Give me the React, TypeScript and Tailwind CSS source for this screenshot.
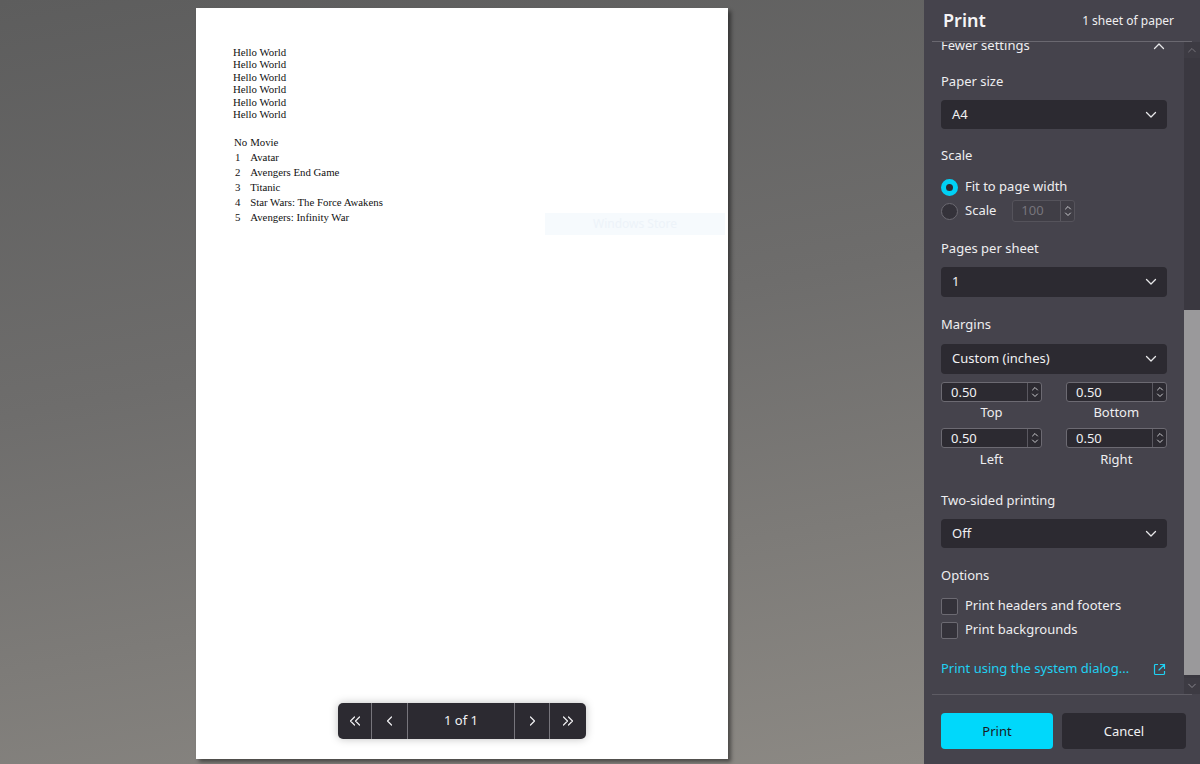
import React from "react";

const UI = { fontFamily: '"Segoe UI", "Noto Sans", "Open Sans", sans-serif' };
const SERIF = { fontFamily: '"Liberation Serif", "Times New Roman", serif' };

function Chevron({ up = false, className = "" }: { up?: boolean; className?: string }) {
  return (
    <svg width="12" height="8" viewBox="0 0 12 8" className={className} fill="none">
      <path d={up ? "M1.5 6.5 L6 2 L10.5 6.5" : "M1.5 1.5 L6 6 L10.5 1.5"} stroke="currentColor" strokeWidth="1.3" strokeLinecap="round" strokeLinejoin="round" />
    </svg>
  );
}

function Spin() {
  return (
    <div className="flex h-full w-[14px] flex-col items-center justify-center border-l border-[#5a5860] text-[#c8c8cc]">
      <svg width="8" height="14" viewBox="0 0 8 14" fill="none">
        <path d="M1.5 5 L4 2.5 L6.5 5" stroke="currentColor" strokeWidth="1" strokeLinecap="round" strokeLinejoin="round" />
        <path d="M1.5 9 L4 11.5 L6.5 9" stroke="currentColor" strokeWidth="1" strokeLinecap="round" strokeLinejoin="round" />
      </svg>
    </div>
  );
}

function Select({ value, mt, h = "h-[30px]" }: { value: string; mt: string; h?: string }) {
  return (
    <div className={`${mt} ${h} flex items-center justify-between rounded-[4px] bg-[#2c2a31] pl-[11px] pr-[10px] text-[13px] text-[#f1f1f3]`}>
      <span>{value}</span>
      <Chevron className="text-[#e8e8ea]" />
    </div>
  );
}

function Label({ text, mt }: { text: string; mt: string }) {
  return <div className={`${mt} flex h-[20px] items-center text-[13px] text-[#eeeef0]`}>{text}</div>;
}

function MarginInput() {
  return (
    <div className="flex h-[20px] w-[101px] items-center overflow-hidden rounded-[3px] border border-[#6c6a72] bg-[#2c2a31]">
      <span className="flex-1 pl-[9px] text-[13px] leading-none text-[#f1f1f3]">0.50</span>
      <Spin />
    </div>
  );
}

function Checkbox({ label }: { label: string }) {
  return (
    <div className="flex h-[24px] items-center gap-[7px]">
      <div className="h-[17px] w-[17px] rounded-[2px] border border-[#6c6a72] bg-[#34323a]" />
      <span className="text-[13px] text-[#eeeef0]">{label}</span>
    </div>
  );
}

export default function App() {
  const movies = ["Avatar", "Avengers End Game", "Titanic", "Star Wars: The Force Awakens", "Avengers: Infinity War"];
  return (
    <div className="flex h-[764px] w-[1200px] overflow-hidden" style={UI}>
      {/* Preview area */}
      <div className="relative flex h-full w-[924px] justify-center bg-[linear-gradient(170deg,#5d5d5d_0%,#6e6d6c_45%,#8c8984_100%)]">
        <div className="relative mt-[8px] h-[751px] w-[532px] bg-white shadow-[3px_3px_4px_rgba(0,0,0,0.45)]">
          <div className="pl-[37px] pt-[38px] text-[10.8px] leading-[12.4px] text-[#111]" style={SERIF}>
            {Array.from({ length: 6 }).map((_, i) => (
              <div key={i}>Hello World</div>
            ))}
            <table className="mt-[14px] ml-[1px] border-separate border-spacing-0">
              <tbody>
                <tr className="h-[15px]">
                  <td className="pr-[3px]">No</td>
                  <td>Movie</td>
                </tr>
                {movies.map((m, i) => (
                  <tr key={m} className="h-[15px]">
                    <td className="pl-[1px] pr-[3px]">{i + 1}</td>
                    <td>{m}</td>
                  </tr>
                ))}
              </tbody>
            </table>
          </div>
          <div className="absolute left-[349px] top-[205px] flex h-[22px] w-[180px] items-center justify-center bg-[#f6fafd] text-[12px] text-[#edf3f9]">
            Windows Store
          </div>
          {/* Pager */}
          <div className="absolute bottom-[20px] left-[142px] flex h-[36px] w-[248px] overflow-hidden rounded-[5px] bg-[#2c2a31] text-[#f1f1f3] shadow-[0_0_8px_rgba(0,0,0,0.25)]">
            <div className="flex w-[34px] items-center justify-center border-r border-[#77757c]">
              <svg width="12" height="10" viewBox="0 0 12 10" fill="none"><path d="M5.5 1 L1.5 5 L5.5 9 M10.5 1 L6.5 5 L10.5 9" stroke="currentColor" strokeWidth="1.2" strokeLinecap="round" strokeLinejoin="round" /></svg>
            </div>
            <div className="flex w-[36px] items-center justify-center border-r border-[#77757c]">
              <svg width="8" height="10" viewBox="0 0 8 10" fill="none"><path d="M5.5 1 L1.5 5 L5.5 9" stroke="currentColor" strokeWidth="1.2" strokeLinecap="round" strokeLinejoin="round" /></svg>
            </div>
            <div className="flex flex-1 items-center justify-center border-r border-[#77757c] text-[13px]">1 of 1</div>
            <div className="flex w-[35px] items-center justify-center border-r border-[#77757c]">
              <svg width="8" height="10" viewBox="0 0 8 10" fill="none"><path d="M2.5 1 L6.5 5 L2.5 9" stroke="currentColor" strokeWidth="1.2" strokeLinecap="round" strokeLinejoin="round" /></svg>
            </div>
            <div className="flex w-[36px] items-center justify-center">
              <svg width="12" height="10" viewBox="0 0 12 10" fill="none"><path d="M1.5 1 L5.5 5 L1.5 9 M6.5 1 L10.5 5 L6.5 9" stroke="currentColor" strokeWidth="1.2" strokeLinecap="round" strokeLinejoin="round" /></svg>
            </div>
          </div>
        </div>
      </div>

      {/* Sidebar */}
      <div className="flex h-full w-[276px] flex-col bg-[#45434c]">
        <div className="mx-[8px] flex h-[42px] shrink-0 items-center justify-between border-b border-[#6a6870] pl-[11px] pr-[18px]">
          <span className="text-[18px] font-semibold text-[#f5f5f7]">Print</span>
          <span className="text-[12px] text-[#efeff1]">1 sheet of paper</span>
        </div>
        <div className="flex min-h-0 flex-1">
          <div className="flex-1 overflow-hidden pl-[17px] pr-[17px]">
            <div className="-mt-[6px] flex h-[20px] items-center justify-between pr-[2px] text-[13px] text-[#eeeef0]">
              <span>Fewer settings</span>
              <Chevron up className="text-[#e8e8ea]" />
            </div>
            <Label text="Paper size" mt="mt-[16px]" />
            <Select value="A4" mt="mt-[8px]" h="h-[29px]" />
            <Label text="Scale" mt="mt-[17px]" />
            <div className="mt-[9px] flex h-[24px] items-center gap-[7px]">
              <div className="h-[17px] w-[17px] rounded-full border-[5px] border-[#00d1f5] bg-[#2c2a31]" />
              <span className="text-[13px] text-[#eeeef0]">Fit to page width</span>
            </div>
            <div className="flex h-[24px] items-center gap-[7px]">
              <div className="h-[17px] w-[17px] rounded-full border border-[#6c6a72] bg-[#34323a]" />
              <span className="text-[13px] text-[#eeeef0]">Scale</span>
              <div className="ml-[9px] flex h-[22px] w-[63px] items-center overflow-hidden rounded-[3px] border border-[#55535b] bg-[#403e46]">
                <span className="flex-1 pl-[8px] text-[13px] text-[#77757c]">100</span>
                <Spin />
              </div>
            </div>
            <Label text="Pages per sheet" mt="mt-[16px]" />
            <Select value="1" mt="mt-[8px]" />
            <Label text="Margins" mt="mt-[18px]" />
            <Select value="Custom (inches)" mt="mt-[9px]" />
            <div className="mt-[8px] grid grid-cols-2 gap-x-[23px]">
              <MarginInput />
              <div className="flex justify-end"><MarginInput /></div>
              <div className="mt-[1px] flex h-[20px] w-[101px] items-center justify-center text-[13px] text-[#eeeef0]">Top</div>
              <div className="mt-[1px] flex h-[20px] items-center justify-center text-[13px] text-[#eeeef0]">Bottom</div>
              <div className="mt-[5px]"><MarginInput /></div>
              <div className="mt-[5px] flex justify-end"><MarginInput /></div>
              <div className="mt-[2px] flex h-[20px] w-[101px] items-center justify-center text-[13px] text-[#eeeef0]">Left</div>
              <div className="mt-[2px] flex h-[20px] items-center justify-center text-[13px] text-[#eeeef0]">Right</div>
            </div>
            <Label text="Two-sided printing" mt="mt-[21px]" />
            <Select value="Off" mt="mt-[8px]" h="h-[29px]" />
            <Label text="Options" mt="mt-[18px]" />
            <div className="mt-[8px]">
              <Checkbox label="Print headers and footers" />
              <Checkbox label="Print backgrounds" />
            </div>
            <div className="mt-[17px] flex h-[20px] items-center justify-between text-[13px] text-[#1fd0f2]">
              <span>Print using the system dialog...</span>
              <svg width="13" height="13" viewBox="0 0 13 13" fill="none" className="mr-[1px]">
                <path d="M5 1.5 H2.5 A1 1 0 0 0 1.5 2.5 V10.5 A1 1 0 0 0 2.5 11.5 H10.5 A1 1 0 0 0 11.5 10.5 V8" stroke="currentColor" strokeWidth="1.2" />
                <path d="M7.5 1.5 H11.5 V5.5 M11.5 1.5 L6 7" stroke="currentColor" strokeWidth="1.2" strokeLinecap="round" strokeLinejoin="round" />
              </svg>
            </div>
          </div>
          {/* Scrollbar */}
          <div className="flex w-[16px] flex-col bg-[#3a3840]">
            <div className="flex h-[16px] items-center justify-center bg-[#3d3b43] text-[#77757c]">
              <Chevron up className="scale-75" />
            </div>
            <div className="mt-[252px] h-[365px] bg-[#9a999b]" />
            <div className="flex-1" />
            <div className="flex h-[16px] items-center justify-center bg-[#3d3b43] text-[#8a888f]">
              <Chevron className="scale-75" />
            </div>
          </div>
        </div>
        <div className="mx-[8px] flex h-[70px] shrink-0 items-start gap-[9px] border-t border-[#5e5c64] pl-[9px] pr-[6px] pt-[18px]">
          <div className="flex h-[36px] w-[112px] items-center justify-center rounded-[4px] bg-[#00d8fb] pt-[1px] text-[13px] text-[#1a1a1e]">Print</div>
          <div className="flex h-[36px] flex-1 items-center justify-center rounded-[4px] bg-[#2c2a31] pt-[1px] text-[13px] text-[#f1f1f3]">Cancel</div>
        </div>
      </div>
    </div>
  );
}
